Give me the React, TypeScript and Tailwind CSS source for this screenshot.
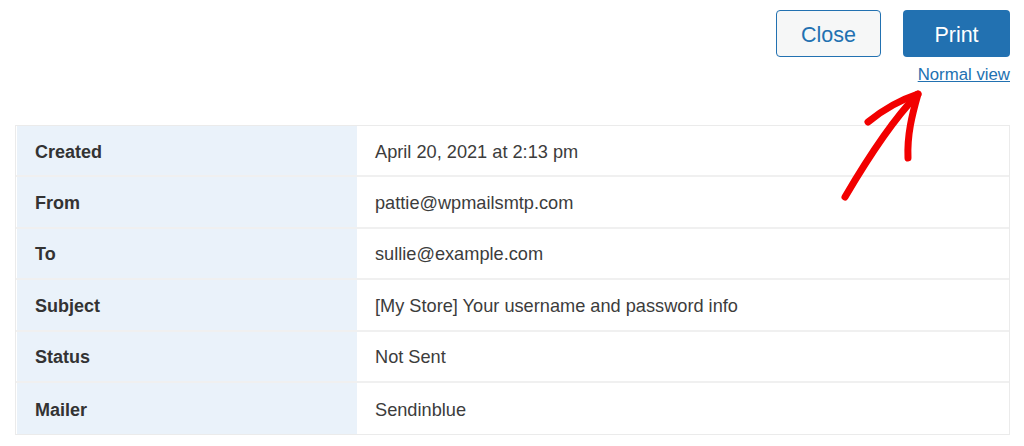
import React from "react";

const rows = [
  { label: "Created", value: "April 20, 2021 at 2:13 pm" },
  { label: "From", value: "pattie@wpmailsmtp.com" },
  { label: "To", value: "sullie@example.com" },
  { label: "Subject", value: "[My Store] Your username and password info" },
  { label: "Status", value: "Not Sent" },
  { label: "Mailer", value: "Sendinblue" },
];

const App = () => {
  return (
    <div
      className="relative w-[1024px] h-[446px] bg-white overflow-hidden"
      style={{ fontFamily: '"Liberation Sans", Arial, sans-serif' }}
    >
      {/* Actions */}
      <div className="flex flex-col items-end pr-[14px] pt-[10px]">
        <div className="flex gap-[22px]">
          <button className="w-[105px] h-[47px] pt-[3px] rounded-[4px] border border-[#2271b1] bg-[#f6f7f7] text-[#2271b1] text-[21.5px]">
            Close
          </button>
          <button className="w-[107px] h-[47px] pt-[3px] rounded-[4px] bg-[#2271b1] text-white text-[21.5px]">
            Print
          </button>
        </div>
        <a
          href="#"
          className="mt-[8px] text-[16.8px] leading-[19px] text-[#2271b1] underline"
        >
          Normal view
        </a>
      </div>

      {/* Details table */}
      <div className="ml-[15px] mr-[14px] mt-[41px] border border-[#ebebeb]">
        {rows.map((row, i) => (
          <div
            key={row.label}
            className={`flex h-[51.4px] ${i < rows.length - 1 ? "border-b-2 border-[#f0f0f0]" : ""}`}
          >
            <div className="w-[340px] ml-[1px] bg-[#eaf2fa] flex items-center pl-[18px] pt-[3px] text-[18px] font-bold text-[#333]">
              {row.label}
            </div>
            <div className="flex-1 flex items-center pl-[18px] pt-[3px] text-[18.2px] text-[#3c3c3c]">
              {row.value}
            </div>
          </div>
        ))}
      </div>

      {/* Hand-drawn arrow */}
      <svg
        className="absolute left-0 top-0 pointer-events-none"
        width="1024"
        height="446"
        viewBox="0 0 1024 446"
      >
        <g
          fill="none"
          stroke="#f20000"
          strokeWidth="7"
          strokeLinecap="round"
          strokeLinejoin="round"
        >
          <path d="M845 197 C 862 168, 888 125, 917 95" />
          <path d="M868 122 C 885 108, 900 100, 918 94" />
          <path d="M918 94 C 912 115, 907 135, 908 158" />
        </g>
      </svg>
    </div>
  );
};

export default App;
